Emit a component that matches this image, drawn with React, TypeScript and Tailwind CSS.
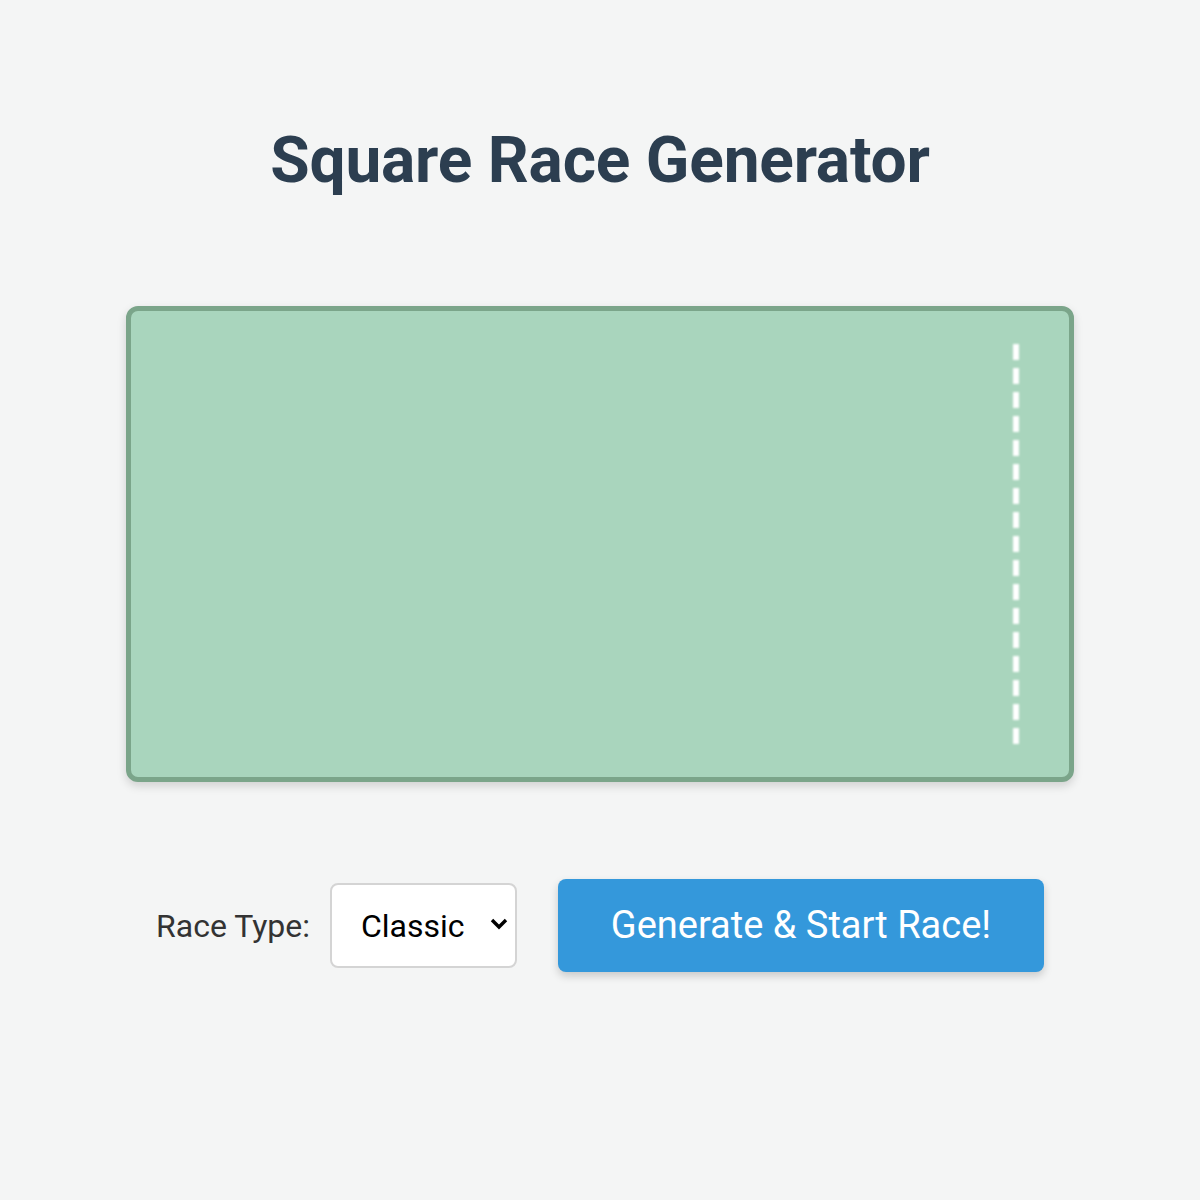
import React, { useState } from "react";

const App: React.FC = () => {
  const [raceType, setRaceType] = useState("classic");

  return (
    <div className="min-h-screen w-full bg-[#f4f5f5] flex flex-col items-center font-['Roboto',sans-serif]">
      <h1 className="mt-[119px] text-[64px] leading-[84px] font-bold text-[#2c3e50] tracking-[-0.2px]">
        Square Race Generator
      </h1>

      <div className="mt-[103px] w-[948px] h-[476px] bg-[#a9d5bd] border-[5px] border-[#7ba58a] rounded-[12px] shadow-[0_4px_10px_rgba(0,0,0,0.15)] flex justify-end pt-[33px] pr-[50px]">
        <div className="w-[6px] h-[400px] blur-[0.8px] bg-[repeating-linear-gradient(to_bottom,#ffffff_0px,#ffffff_16px,transparent_16px,transparent_24px)]" />
      </div>

      <div className="mt-[97px] flex items-center">
        <label className="text-[32px] text-[#333333] mr-[20px]">Race Type:</label>
        <div className="relative">
          <select
            value={raceType}
            onChange={(e) => setRaceType(e.target.value)}
            className="appearance-none w-[187px] h-[85px] bg-white border-2 border-[#d4d4d4] rounded-[8px] pl-[29px] text-[32px] text-black outline-none"
          >
            <option value="classic">Classic</option>
            <option value="sprint">Sprint</option>
            <option value="endurance">Endurance</option>
          </select>
          <svg
            className="absolute right-[9px] top-[34px] pointer-events-none"
            width="18"
            height="14"
            viewBox="0 0 18 14"
          >
            <path d="M2 3 L9 10 L16 3" fill="none" stroke="#000" strokeWidth="3.4" />
          </svg>
        </div>
        <button className="ml-[41px] w-[486px] h-[93px] bg-[#3498db] rounded-[8px] text-white text-[38px] shadow-[0_4px_8px_rgba(0,0,0,0.18)]">
          Generate &amp; Start Race!
        </button>
      </div>
    </div>
  );
};

export default App;
